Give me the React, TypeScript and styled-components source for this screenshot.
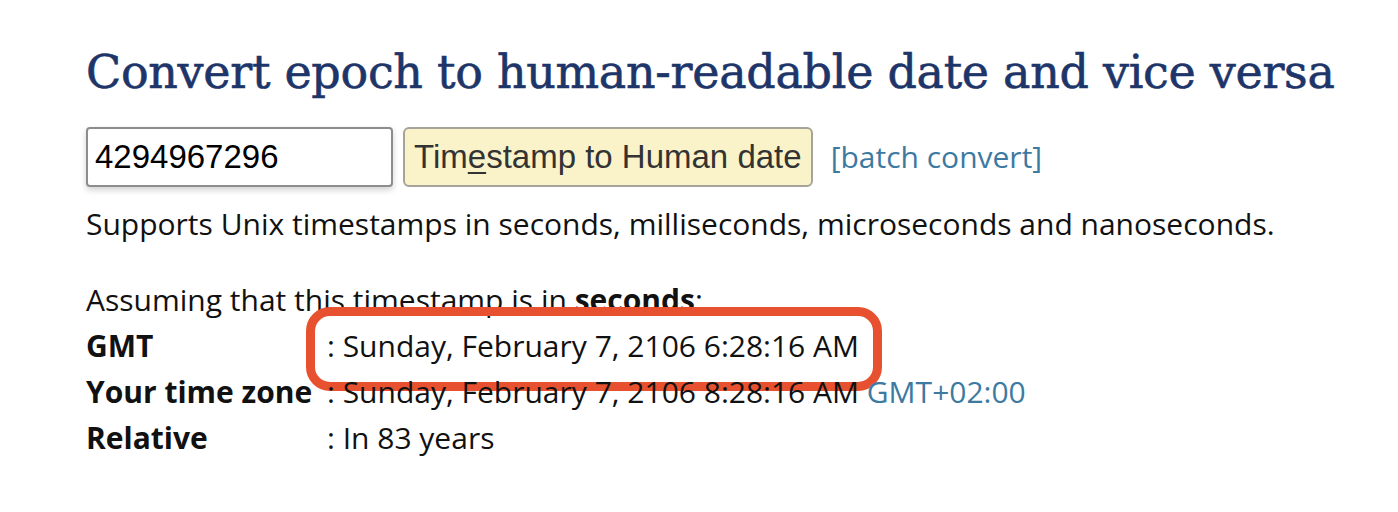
import * as React from "react";
import styled, { createGlobalStyle } from "styled-components";

const GlobalStyle = createGlobalStyle`
  html, body {
    margin: 0;
    background: #ffffff;
  }
  body {
    font-family: "Open Sans", "Liberation Sans", sans-serif;
    color: #111111;
  }
`;

const Page = styled.main`
  padding: 42px 0 0 86px;
  font-size: 30px;
  line-height: 46px;
`;

const Title = styled.h1`
  margin: 0 0 25px;
  font-family: "DejaVu Serif", "Liberation Serif", serif;
  font-weight: 400;
  font-size: 46px;
  line-height: 60px;
  color: #1e3569;
  letter-spacing: -0.3px;
  -webkit-text-stroke: 0.6px #1e3569;
`;

const Form = styled.form`
  display: flex;
  align-items: center;
  gap: 10px;
  margin: 0;
`;

const TimestampInput = styled.input`
  box-sizing: border-box;
  width: 307px;
  height: 60px;
  padding: 0 7px;
  border: 2px solid #8d8d8d;
  border-radius: 4px;
  box-shadow: 0 3px 6px rgba(0, 0, 0, 0.18);
  font-family: "Liberation Sans", Arial, sans-serif;
  font-size: 33px;
  color: #000;
  outline: none;
`;

const ConvertButton = styled.button`
  box-sizing: border-box;
  height: 60px;
  padding: 0 9px;
  border: 2px solid #a6a39a;
  border-radius: 6px;
  background: #faf3c9;
  font-family: "Liberation Sans", Arial, sans-serif;
  font-size: 33px;
  color: #333;
  cursor: pointer;

  u {
    text-decoration-thickness: 2px;
    text-underline-offset: 4px;
  }
`;

const Link = styled.a`
  color: #3d7aa1;
  text-decoration: none;
`;

const BatchLink = styled(Link)`
  margin-left: 8px;
`;

const Note = styled.p`
  margin: 14px 0 30px;
`;

const Intro = styled.div``;

const Results = styled.div`
  display: grid;
  grid-template-columns: 241px auto;
  justify-content: start;
`;

const Label = styled.div`
  font-weight: 700;
`;

const Value = styled.div`
  position: relative;
  justify-self: start;
  white-space: nowrap;
`;

const Marker = styled.span`
  position: absolute;
  left: -21px;
  right: -23px;
  top: -16px;
  bottom: -22px;
  border: 9px solid #e8512f;
  border-radius: 24px;
  pointer-events: none;
`;

export default function App() {
  return (
    <>
      <GlobalStyle />
      <Page>
        <Title>Convert epoch to human-readable date and vice versa</Title>
        <Form onSubmit={(e) => e.preventDefault()}>
          <TimestampInput defaultValue="4294967296" />
          <ConvertButton type="submit">
            Tim<u>e</u>stamp to Human date
          </ConvertButton>
          <BatchLink href="#">[batch convert]</BatchLink>
        </Form>
        <Note>
          Supports Unix timestamps in seconds, milliseconds, microseconds and
          nanoseconds.
        </Note>
        <Intro>
          Assuming that this timestamp is in <b>seconds</b>:
        </Intro>
        <Results>
          <Label>GMT</Label>
          <Value>
            : Sunday, February 7, 2106 6:28:16 AM
            <Marker />
          </Value>
          <Label>Your time zone</Label>
          <Value>
            : Sunday, February 7, 2106 8:28:16 AM <Link href="#">GMT+02:00</Link>
          </Value>
          <Label>Relative</Label>
          <Value>: In 83 years</Value>
        </Results>
      </Page>
    </>
  );
}
